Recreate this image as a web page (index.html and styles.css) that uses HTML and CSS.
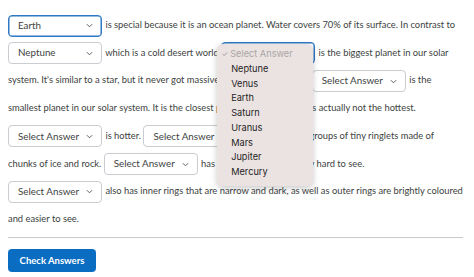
FILE: index.html
```html
<!DOCTYPE html>
<html lang="en">
<head>
    <meta charset="UTF-8">
    <meta name="viewport" content="width=device-width, initial-scale=1.0">
    <title>Planets Quiz</title>
    <link rel="stylesheet" href="styles.css">
</head>
<body>
    <div class="quiz">
        <div class="cloze">
            <span class="pick focused"><span class="pick-text">Earth</span><svg class="chev" viewBox="0 0 8 5"><path d="M1 1l3 3 3-3"/></svg></span> is special because it is an ocean planet. Water covers 70% of its surface. In contrast to
            <span class="pick"><span class="pick-text">Neptune</span><svg class="chev" viewBox="0 0 8 5"><path d="M1 1l3 3 3-3"/></svg></span> which is a cold desert world
            <span class="pick-wrap"><span class="pick focused"><span class="pick-text">Select Answer</span><svg class="chev" viewBox="0 0 8 5"><path d="M1 1l3 3 3-3"/></svg></span><span class="menu">
                    <span class="menu-item checked">Select Answer</span>
                    <span class="menu-item">Neptune</span>
                    <span class="menu-item">Venus</span>
                    <span class="menu-item">Earth</span>
                    <span class="menu-item">Saturn</span>
                    <span class="menu-item">Uranus</span>
                    <span class="menu-item">Mars</span>
                    <span class="menu-item">Jupiter</span>
                    <span class="menu-item">Mercury</span>
                </span></span> is the biggest planet in our solar system. It's similar to a star, but it never got massive enough for reigniting.
            <span class="pick"><span class="pick-text">Select Answer</span><svg class="chev" viewBox="0 0 8 5"><path d="M1 1l3 3 3-3"/></svg></span> is the smallest planet in our solar system. It is the closest planet to the Sun but it's actually not the hottest.
            <span class="pick"><span class="pick-text">Select Answer</span><svg class="chev" viewBox="0 0 8 5"><path d="M1 1l3 3 3-3"/></svg></span> is hotter.
            <span class="pick"><span class="pick-text">Select Answer</span><svg class="chev" viewBox="0 0 8 5"><path d="M1 1l3 3 3-3"/></svg></span> has about seven groups of tiny ringlets made of chunks of ice and rock.
            <span class="pick"><span class="pick-text">Select Answer</span><svg class="chev" viewBox="0 0 8 5"><path d="M1 1l3 3 3-3"/></svg></span> has small rings that are very hard to see.<br>
            <span class="pick"><span class="pick-text">Select Answer</span><svg class="chev" viewBox="0 0 8 5"><path d="M1 1l3 3 3-3"/></svg></span> also has inner rings that are narrow and dark, as well as outer rings are brightly coloured and easier to see.
        </div>
        <hr class="divider">
        <button class="check-btn">Check Answers</button>
    </div>
</body>
</html>
```

FILE: styles.css
```css
body {
    margin: 0;
    padding: 11px 8px 0 8px;
    font-family: 'Lato', sans-serif;
    color: #3d3f41;
    background-color: #fff;
}
.quiz {
    width: 455px;
}
.cloze {
    font-size: 9.35px;
    line-height: 27.7px;
}
.pick-wrap {
    position: relative;
    display: inline-block;
    vertical-align: middle;
    line-height: 1;
}
.pick {
    display: inline-flex;
    align-items: center;
    justify-content: space-between;
    box-sizing: border-box;
    width: 94px;
    height: 22px;
    padding: 0 8px 0 9px;
    margin-right: 1px;
    border: 1px solid #c9ccd0;
    border-radius: 4px;
    vertical-align: middle;
    line-height: 1;
    font-size: 9.8px;
    background-color: #fff;
}
.pick.focused {
    border-color: #2f78c4;
    box-shadow: inset 0 0 0 0.5px #2f78c4;
}
.pick-text {
    color: #3d3f41;
}
.chev {
    width: 7px;
    height: 5px;
    fill: none;
    stroke: #56595c;
    stroke-width: 1.1;
}
.menu {
    position: absolute;
    left: -4px;
    top: 2px;
    display: block;
    width: 96px;
    padding: 3px 0 6px 0;
    background-color: #ebe3e2;
    border-radius: 6px;
    box-shadow: 0 2px 6px rgba(0, 0, 0, 0.22);
    font-family: 'Inter', sans-serif;
    font-size: 9.2px;
    line-height: 14.7px;
    color: #1e1e1e;
    z-index: 2;
}
.menu-item {
    display: block;
    padding-left: 14px;
}
.menu-item.checked {
    color: #a8a5a5;
}
.menu-item.checked::before {
    content: "\2713";
    display: inline-block;
    width: 9px;
    margin-left: -10px;
    font-size: 8px;
}
.divider {
    margin: 4px 0 0 0;
    border: none;
    border-top: 1px solid #c9c9c9;
}
.check-btn {
    margin-top: 11px;
    width: 88px;
    height: 23px;
    padding: 0;
    background-color: #0a6dc2;
    color: #fff;
    border: none;
    border-radius: 4px;
    font-family: 'Lato', sans-serif;
    font-weight: 700;
    font-size: 9.5px;
    cursor: pointer;
}
```
